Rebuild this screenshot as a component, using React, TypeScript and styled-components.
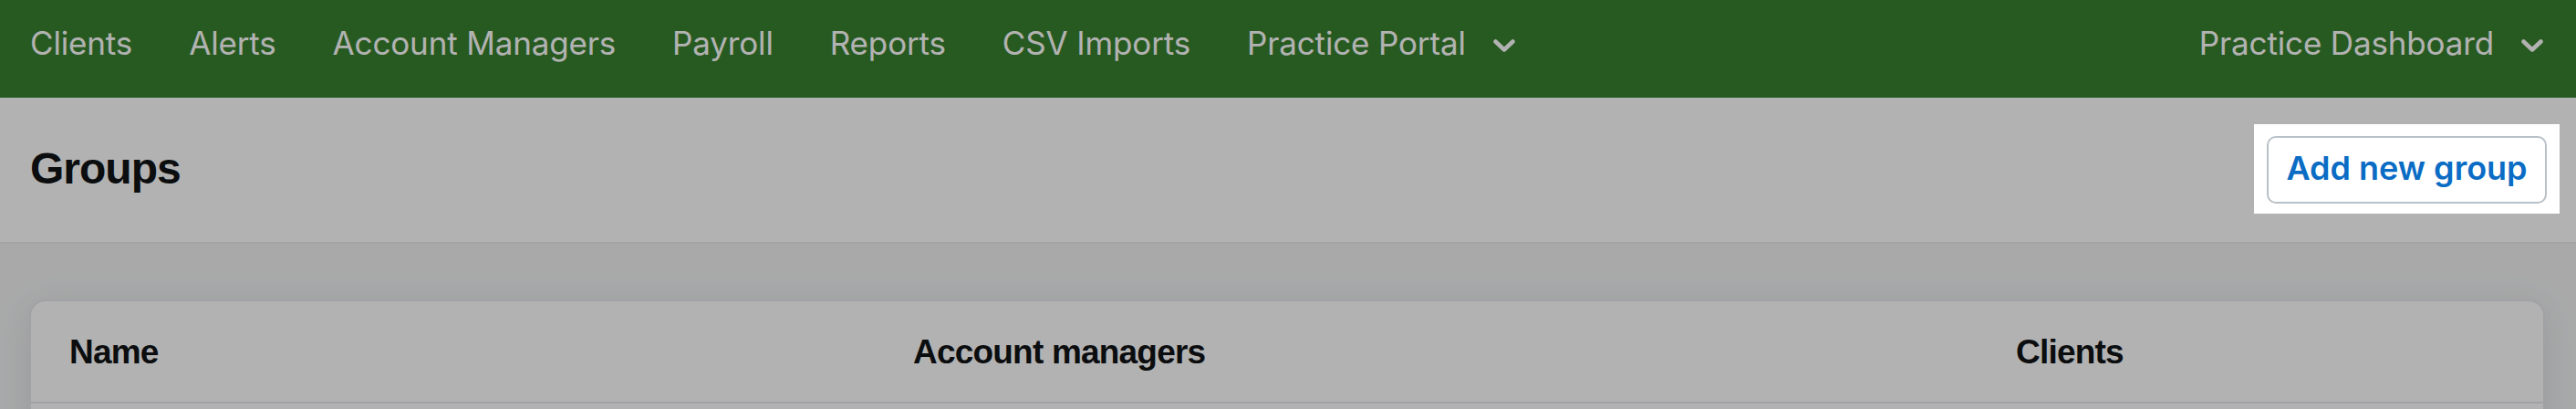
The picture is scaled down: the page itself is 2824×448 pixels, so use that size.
import React from 'react';
import styled, { createGlobalStyle } from 'styled-components';

const GlobalStyle = createGlobalStyle`
  html, body {
    margin: 0;
    padding: 0;
    background: #f2f3f4;
  }
  * {
    box-sizing: border-box;
  }
`;

const navItems = ['Clients', 'Alerts', 'Account Managers', 'Payroll', 'Reports', 'CSV Imports'];
const columns = ['Name', 'Account managers', 'Clients'];

const Chevron = () => (
  <svg width="24" height="14" viewBox="0 0 24 14" fill="none">
    <polyline
      points="2.5,2.5 12,11.5 21.5,2.5"
      stroke="currentColor"
      strokeWidth="4.5"
      strokeLinecap="round"
      strokeLinejoin="round"
    />
  </svg>
);

const App = () => {
  return (
    <>
      <GlobalStyle />
      <StyledPage>
        <StyledNav>
          <StyledNavLinks>
            {navItems.map((item) => (
              <StyledNavLink key={item}>{item}</StyledNavLink>
            ))}
            <StyledNavLink>
              Practice Portal
              <Chevron />
            </StyledNavLink>
          </StyledNavLinks>
          <StyledNavLink>
            Practice Dashboard
            <Chevron />
          </StyledNavLink>
        </StyledNav>

        <StyledHeader>
          <StyledTitle>Groups</StyledTitle>
          <StyledSpotlight>
            <StyledButton type="button">Add new group</StyledButton>
          </StyledSpotlight>
        </StyledHeader>

        <StyledSection>
          <StyledCard>
            <StyledHeadRow>
              {columns.map((col) => (
                <StyledHeadCell key={col}>{col}</StyledHeadCell>
              ))}
            </StyledHeadRow>
            <StyledEmptyBody />
          </StyledCard>
        </StyledSection>

        {/* onboarding dimmer, the spotlight sits above it */}
        <StyledOverlay />
      </StyledPage>
    </>
  );
};

export default App;

const StyledPage = styled.div`
  min-height: 448px;
  background: #f2f3f4;
`;

const StyledNav = styled.nav`
  height: 107px;
  background: #39822e;
  display: flex;
  align-items: center;
  justify-content: space-between;
  padding: 0 36px 12px 33px;
`;

const StyledNavLinks = styled.div`
  display: flex;
  align-items: center;
  gap: 62px;
`;

const StyledNavLink = styled.a`
  display: flex;
  align-items: center;
  gap: 30px;
  color: #ffffff;
  font-family: Inter, 'Noto Sans', sans-serif;
  font-size: 35px;
  font-weight: 400;
  letter-spacing: -0.15px;
  line-height: 1;
  white-space: nowrap;
  cursor: pointer;

  svg {
    margin-top: 4px;
  }
`;

const StyledHeader = styled.header`
  height: 160px;
  background: #ffffff;
  border-bottom: 2px solid #ebebf0;
  display: flex;
  align-items: center;
  justify-content: space-between;
  padding: 0 18px 2px 33px;
`;

const StyledTitle = styled.h1`
  margin: 0;
  color: #111416;
  font-family: 'Liberation Sans', Arial, sans-serif;
  font-size: 48px;
  font-weight: 700;
  letter-spacing: -1px;
  line-height: 1;
`;

const StyledSpotlight = styled.div`
  position: relative;
  z-index: 20;
  background: #ffffff;
  padding: 13px 14px 11px 14px;
`;

const StyledButton = styled.button`
  display: flex;
  align-items: center;
  justify-content: center;
  width: 307px;
  height: 74px;
  background: #ffffff;
  border: 2px solid #b9c1c8;
  border-radius: 10px;
  color: #0a6cc4;
  font-family: Inter, 'Noto Sans', sans-serif;
  font-size: 36px;
  font-weight: 600;
  padding: 0 0 4px;
  cursor: pointer;
`;

const StyledSection = styled.main`
  padding: 61px 34px 0 32px;
`;

const StyledCard = styled.div`
  background: #ffffff;
  border: 2px solid #e8e9ee;
  border-radius: 18px;
  box-shadow: 0 6px 40px rgba(0, 0, 0, 0.09);
`;

const StyledHeadRow = styled.div`
  display: grid;
  grid-template-columns: 925px 1209px 1fr;
  align-items: center;
  height: 112px;
  padding: 0 0 0 42px;
  border-bottom: 2px solid #e8e9ee;
`;

const StyledHeadCell = styled.div`
  color: #111416;
  font-family: 'Liberation Sans', Arial, sans-serif;
  font-size: 37px;
  font-weight: 700;
  letter-spacing: -0.8px;
  line-height: 1;
`;

const StyledEmptyBody = styled.div`
  height: 120px;
`;

const StyledOverlay = styled.div`
  position: fixed;
  inset: 0;
  z-index: 10;
  background: rgba(0, 0, 0, 0.3);
  pointer-events: none;
`;
